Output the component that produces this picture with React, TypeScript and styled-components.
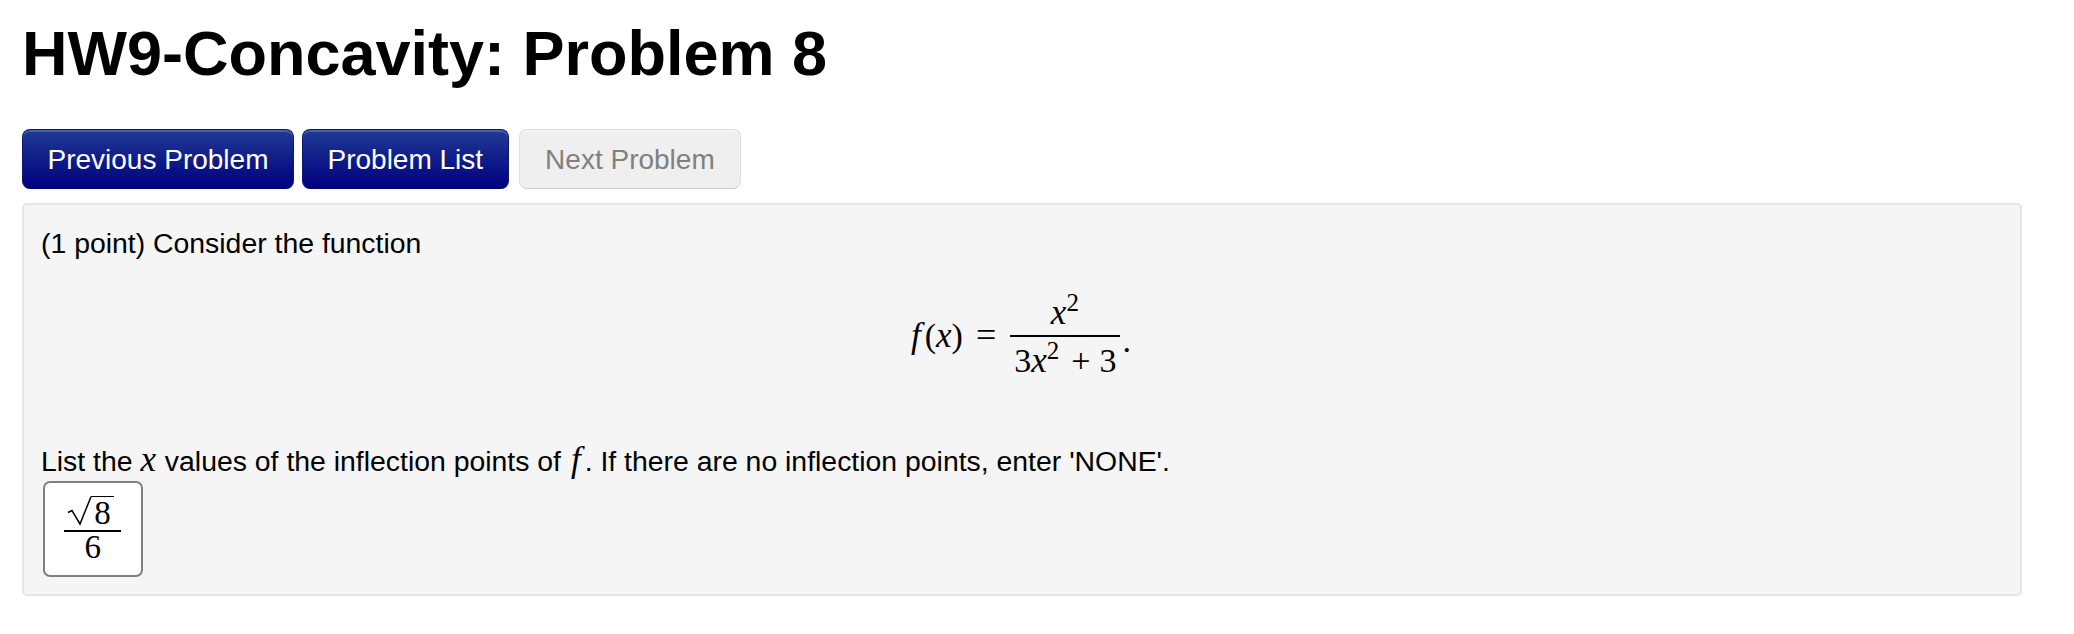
import React from "react";
import styled, { createGlobalStyle } from "styled-components";

const Global = createGlobalStyle`
  html, body { margin: 0; padding: 0; background: #fff; }
  body { font-family: "Liberation Sans", Arial, sans-serif; color: #000; }
`;

const Page = styled.main`
  padding: 17px 52px 0 22px;
`;

const Title = styled.h1`
  margin: 0;
  font-size: 63px;
  line-height: 72px;
  font-weight: 700;
  color: #000;
`;

const Nav = styled.nav`
  display: flex;
  gap: 8px;
  margin-top: 40px;
`;

const NavButton = styled.a<{ $disabled?: boolean }>`
  box-sizing: border-box;
  height: 60px;
  display: flex;
  align-items: center;
  padding: 2px ${(p) => (p.$disabled ? "25px" : "24.5px")} 0;
  margin-left: ${(p) => (p.$disabled ? "2.5px" : "0")};
  font-size: 28px;
  border-radius: 8px;
  border: 1.5px solid ${(p) => (p.$disabled ? "#dedede" : "#0c1a6e")};
  border-bottom-color: ${(p) => (p.$disabled ? "#cfcfcf" : "#00006a")};
  color: ${(p) => (p.$disabled ? "#808080" : "#fff")};
  background: ${(p) => (p.$disabled ? "#efefef" : "linear-gradient(#1f3a93, #00007f)")};
  box-shadow: ${(p) =>
    p.$disabled ? "inset 0 2px 0 rgba(255, 255, 255, 0.3)" : "inset 0 2px 0 rgba(255, 255, 255, 0.2)"};
`;

const Panel = styled.section`
  box-sizing: border-box;
  margin-top: 14px;
  height: 393px;
  padding: 18px 17px 0;
  background: #f5f5f5;
  border: 2px solid #e5e5e5;
  border-radius: 5px;
  font-size: 28.4px;
  line-height: 40px;
`;

const DisplayMath = styled.div`
  display: flex;
  justify-content: center;
  align-items: center;
  margin-top: 24px;
  padding-right: 6px;
  height: 96px;
  font-family: "Liberation Serif", serif;
  font-size: 34px;
  line-height: 40px;
`;

const Lhs = styled.span`
  padding-top: 2px;
`;

const Var = styled.i`
  font-family: "Liberation Serif", serif;
  font-style: italic;
  font-size: 35px;
`;

const FnVar = styled(Var)`
  margin: 0 4px;
`;

const InlineVar = styled(Var)`
  margin-right: 1px;
`;

const InlineFn = styled(Var)`
  margin: 0 4px 0 2px;
`;

const Eq = styled.span`
  font-size: 36px;
  margin: 0 14px 0 13px;
`;

const Fraction = styled.span`
  display: inline-flex;
  flex-direction: column;
  align-items: center;
`;

const Numerator = styled.span`
  padding: 0 5px 2px 4px;
  height: 46px;
  box-sizing: border-box;
  display: flex;
  align-items: flex-end;
  justify-content: center;
`;

const Denominator = styled.span`
  border-top: 2px solid #000;
  padding: 4.5px 4px 0;
  height: 40px;
  white-space: nowrap;
`;

const Sup = styled.sup`
  font-size: 25px;
  line-height: 0;
  vertical-align: 13px;
`;

const Plus = styled.span`
  margin-left: 12px;
  margin-right: 9px;
`;

const Period = styled.span`
  align-self: center;
  margin: 12px 0 0 2px;
`;

const Prompt = styled.p`
  margin: 57px 0 0;
`;

const AnswerBox = styled.div`
  box-sizing: border-box;
  margin: 0 0 0 1.5px;
  width: 100.5px;
  height: 96px;
  border: 2px solid #7f7f7f;
  border-radius: 7px;
  background: #fff;
  display: flex;
  justify-content: center;
  align-items: flex-start;
  padding-top: 13px;
  font-family: "Liberation Serif", serif;
  font-size: 33px;
`;

const Radical = styled.span`
  display: flex;
  align-items: flex-start;
  height: 34px;
  width: 57px;
  padding-left: 3px;
  box-sizing: border-box;
`;

const Radicand = styled.span`
  border-top: 1.5px solid #000;
  height: 32px;
  line-height: 33px;
  padding: 0 3px;
  margin-left: -1px;
`;

const Lower = styled.span`
  border-top: 2px solid #000;
  width: 57px;
  text-align: center;
  line-height: 31px;
`;

export default function App() {
  return (
    <Page>
      <Global />
      <Title>HW9-Concavity: Problem 8</Title>
      <Nav>
        <NavButton>Previous Problem</NavButton>
        <NavButton>Problem List</NavButton>
        <NavButton $disabled>Next Problem</NavButton>
      </Nav>
      <Panel>
        <div>(1 point) Consider the function</div>
        <DisplayMath>
          <Lhs>
            <FnVar>f</FnVar>(<Var>x</Var>)
          </Lhs>
          <Eq>=</Eq>
          <Fraction>
            <Numerator>
              <span>
                <Var>x</Var>
                <Sup>2</Sup>
              </span>
            </Numerator>
            <Denominator>
              3<Var>x</Var>
              <Sup>2</Sup>
              <Plus>+</Plus>3
            </Denominator>
          </Fraction>
          <Period>.</Period>
        </DisplayMath>
        <Prompt>
          List the <InlineVar>x</InlineVar> values of the inflection points of <InlineFn>f</InlineFn>. If there are no
          inflection points, enter 'NONE'.
        </Prompt>
        <AnswerBox>
          <Fraction>
            <Radical>
              <svg width="25" height="30" viewBox="0 0 25 30">
                <path d="M1 16.5 L5 14.5 L13 28 L24 0.7" fill="none" stroke="#000" strokeWidth="1.5" />
              </svg>
              <Radicand>8</Radicand>
            </Radical>
            <Lower>6</Lower>
          </Fraction>
        </AnswerBox>
      </Panel>
    </Page>
  );
}
